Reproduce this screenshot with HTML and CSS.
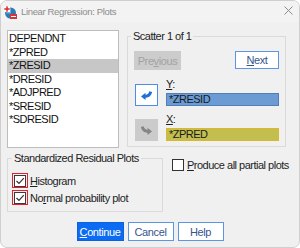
FILE: index.html
```html
<!DOCTYPE html>
<html lang="en">
<head>
	<meta charset="UTF-8">
	<title>Linear Regression: Plots</title>
	<link rel="stylesheet" href="styles.css">
</head>
<body>
	<div class="window">
		<div class="titlebar">
			<svg class="appicon" width="13" height="13" viewBox="0 0 13 13">
				<circle cx="6.5" cy="7" r="5.5" fill="#2f78b8"/>
				<path d="M2 7.5 Q3 3 7 2 L7 7.5 Z" fill="#6fb0d8"/>
				<rect x="0" y="0" width="6" height="6" fill="#fff"/>
				<rect x="2.2" y="0.3" width="1.6" height="5.4" fill="#d9323a"/>
				<rect x="0.3" y="2.2" width="5.4" height="1.6" fill="#d9323a"/>
				<rect x="6" y="8" width="7" height="5" fill="#d9323a"/>
				<rect x="7" y="10" width="5" height="1" fill="#fff"/>
			</svg>
			<span class="title">Linear Regression: Plots</span>
			<svg class="close" width="9" height="9" viewBox="0 0 9 9">
				<path d="M0.5 0.5 L8.5 8.5 M8.5 0.5 L0.5 8.5" stroke="#8a8a8a" stroke-width="1"/>
			</svg>
		</div>

		<div class="content">
			<div class="toprow">
				<div class="listbox">
					<div class="item">DEPENDNT</div>
					<div class="item">*ZPRED</div>
					<div class="item selected">*ZRESID</div>
					<div class="item">*DRESID</div>
					<div class="item">*ADJPRED</div>
					<div class="item">*SRESID</div>
					<div class="item">*SDRESID</div>
				</div>

				<fieldset class="group scatter">
					<legend>Scatter 1 of 1</legend>
					<div class="nav">
						<button class="btn prev" disabled>Pre<u>v</u>ious</button>
						<button class="btn next"><u>N</u>ext</button>
					</div>
					<div class="target">
						<button class="arrow active">
							<svg width="11" height="9" viewBox="0 0 11 9">
								<path d="M0 5.5 L4.5 1.8 L4.5 9 Z" fill="#1f6fd6"/>
								<path d="M3.5 5.5 Q8.5 5.5 9.8 0.6" fill="none" stroke="#1f6fd6" stroke-width="3"/>
							</svg>
						</button>
						<div class="field">
							<label class="fieldlabel"><u>Y</u>:</label>
							<div class="fieldbox ybox">*ZRESID</div>
						</div>
					</div>
					<div class="target">
						<button class="arrow">
							<svg width="11" height="9" viewBox="0 0 11 9">
								<g transform="translate(11 0) scale(-1 1)">
									<path d="M0 5.5 L4.5 1.8 L4.5 9 Z" fill="#858585"/>
									<path d="M3.5 5.5 Q8.5 5.5 9.8 0.6" fill="none" stroke="#858585" stroke-width="3"/>
								</g>
							</svg>
						</button>
						<div class="field">
							<label class="fieldlabel"><u>X</u>:</label>
							<div class="fieldbox xbox">*ZPRED</div>
						</div>
					</div>
				</fieldset>
			</div>

			<div class="bottomrow">
				<fieldset class="group residual">
					<legend>Standardized Residual Plots</legend>
					<div class="option">
						<span class="mark">
							<span class="check">
								<svg width="10" height="10" viewBox="0 0 10 10"><polyline points="1.5,5 4,7.5 8.8,2.2" fill="none" stroke="#333" stroke-width="1.2"/></svg>
							</span>
						</span>
						<span><u>H</u>istogram</span>
					</div>
					<div class="option">
						<span class="mark">
							<span class="check">
								<svg width="10" height="10" viewBox="0 0 10 10"><polyline points="1.5,5 4,7.5 8.8,2.2" fill="none" stroke="#333" stroke-width="1.2"/></svg>
							</span>
						</span>
						<span>No<u>r</u>mal probability plot</span>
					</div>
				</fieldset>

				<div class="partial">
					<span class="check empty"></span>
					<span><u>P</u>roduce all partial plots</span>
				</div>
			</div>

			<div class="actions">
				<button class="btn primary"><u>C</u>ontinue</button>
				<button class="btn">Cancel</button>
				<button class="btn">Help</button>
			</div>
		</div>
	</div>
</body>
</html>
```

FILE: styles.css
```css
body {
	margin: 0;
	font-family: "Liberation Sans", Arial, sans-serif;
	font-size: 11px;
	letter-spacing: -0.5px;
	color: #1e1e1e;
	background: #ffffff;
}

.window {
	width: 300px;
	height: 248px;
	box-sizing: border-box;
	border: 1px solid #cfcfcf;
	border-radius: 7px;
	background: #f0f0f0;
	overflow: hidden;
}

.titlebar {
	height: 21px;
	display: flex;
	align-items: center;
	background: #f3f3f3;
}

.appicon {
	margin-left: 3px;
	margin-top: 1px;
}

.title {
	margin-left: 4px;
	font-size: 9.5px;
	letter-spacing: -0.35px;
	color: #8c8c8c;
}

.close {
	margin-left: auto;
	margin-right: 6px;
	margin-top: -2px;
}

.content {
	padding: 8px 0 0 6px;
}

.toprow {
	display: flex;
	align-items: flex-start;
}

.listbox {
	width: 112px;
	height: 118px;
	box-sizing: border-box;
	border: 1px solid #bdbdbd;
	background: #fff;
	padding-top: 1px;
}

.item {
	line-height: 13.5px;
	padding-left: 1px;
	color: #111;
}

.item.selected {
	background: #c7c7c7;
}

.group {
	margin: 0;
	border: 1px solid #dadada;
	min-width: 0;
}

.group legend {
	padding: 0 2px;
	line-height: 12px;
	color: #222;
}

.scatter {
	margin-left: 8px;
	width: 159px;
	box-sizing: border-box;
	padding: 9px 6px 5px 6px;
}

.scatter legend {
	margin-left: -3px;
}

.nav {
	display: flex;
	justify-content: space-between;
	align-items: flex-start;
}

.btn {
	font-family: inherit;
	font-size: 11px;
	letter-spacing: -0.4px;
	height: 19px;
	box-sizing: border-box;
	padding: 0;
	border: 1px solid #5c94e6;
	background: #fff;
	color: #34558f;
}

.btn.prev {
	width: 47px;
	background: #cccccc;
	border-color: #cccccc;
	color: #a2a2a2;
}

.btn.next {
	width: 44px;
	height: 18px;
}

.target {
	display: flex;
	align-items: flex-end;
	margin-top: 8px;
}

.target + .target {
	margin-top: 7px;
}

.arrow {
	width: 23px;
	height: 22px;
	box-sizing: border-box;
	margin-left: 1px;
	padding: 0;
	border: 1px solid #cbcbcb;
	background: #cbcbcb;
	display: flex;
	align-items: center;
	justify-content: center;
}

.arrow.active {
	background: #fff;
	border-color: #4d8de6;
}

.field {
	margin-left: 8px;
	flex: 1;
}

.fieldlabel {
	display: block;
	line-height: 12px;
	margin-bottom: 3px;
	color: #222;
}

.fieldbox {
	height: 13px;
	box-sizing: border-box;
	line-height: 11px;
	padding-left: 2px;
	color: #1a1a1a;
}

.ybox {
	background: #6b9bd2;
	border: 1px solid #4f7fb9;
}

.xbox {
	background: #c3bf4f;
	border: 1px solid #dcb62c;
}

.bottomrow {
	display: flex;
	align-items: flex-start;
	margin-top: 4px;
}

.residual {
	width: 156px;
	box-sizing: border-box;
	padding: 8px 4px 5px 4px;
}

.option {
	display: flex;
	align-items: center;
	height: 17px;
}

.mark {
	width: 16px;
	height: 15px;
	box-sizing: border-box;
	border: 1.5px solid #e4202b;
	display: flex;
	align-items: center;
	justify-content: center;
	margin-right: 2px;
}

.check {
	width: 12px;
	height: 12px;
	box-sizing: border-box;
	border: 1px solid #3a3a3a;
	background: #fff;
	display: flex;
	align-items: center;
	justify-content: center;
}

.partial {
	display: flex;
	align-items: center;
	margin: 7px 0 0 9px;
}

.check.empty {
	border-color: #333;
	margin-right: 3px;
}

.actions {
	display: flex;
	justify-content: center;
	gap: 4px;
	margin-top: 10px;
	margin-left: -6px;
}

.actions .btn {
	width: 46px;
}

.actions .btn.primary {
	width: 47px;
	background: #0b6cf3;
	border-color: #0b62da;
	color: #fff;
}
```
